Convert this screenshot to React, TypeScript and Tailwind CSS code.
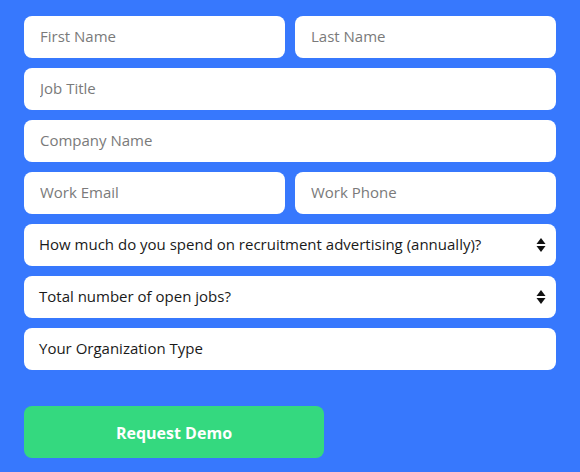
const field =
  'h-[42px] w-full rounded-lg bg-white px-4 pb-[2px] text-[15px] text-[#1a1a1a] placeholder:text-[#7a7a7a] outline-none'

function Arrows() {
  return (
    <svg width="10" height="16" viewBox="0 0 10 16" className="absolute right-[10px] top-1/2 -translate-y-1/2">
      <path d="M5 1 L9.5 7 H0.5 Z" fill="#111" />
      <path d="M5 15 L9.5 9 H0.5 Z" fill="#111" />
    </svg>
  )
}

function SelectRow({ label }: { label: string }) {
  return (
    <div className="relative flex h-[42px] w-full items-center rounded-lg bg-white pb-[2px] pl-[15px] pr-8 text-[15px] text-[#1a1a1a]">
      <span>{label}</span>
      <Arrows />
    </div>
  )
}

export default function App() {
  return (
    <div
      className="min-h-[472px] w-[580px] bg-[#3778fd] px-6 pt-4"
      style={{ fontFamily: '"Open Sans", "Liberation Sans", sans-serif' }}
    >
      <form className="flex flex-col gap-[10px]" onSubmit={(e) => e.preventDefault()}>
        <div className="grid grid-cols-2 gap-[10px]">
          <input className={field} placeholder="First Name" />
          <input className={field} placeholder="Last Name" />
        </div>
        <input className={field} placeholder="Job Title" />
        <input className={field} placeholder="Company Name" />
        <div className="grid grid-cols-2 gap-[10px]">
          <input className={field} placeholder="Work Email" />
          <input className={field} placeholder="Work Phone" />
        </div>
        <SelectRow label="How much do you spend on recruitment advertising (annually)?" />
        <SelectRow label="Total number of open jobs?" />
        <div className="flex h-[42px] w-full items-center rounded-lg bg-white pb-[2px] pl-[15px] text-[15px] text-[#1a1a1a]">
          Your Organization Type
        </div>
        <button
          type="submit"
          className="mt-[26px] h-[52px] w-[300px] rounded-lg bg-[#34d97f] pt-[2px] text-[16px] font-bold text-white"
        >
          Request Demo
        </button>
      </form>
    </div>
  )
}
